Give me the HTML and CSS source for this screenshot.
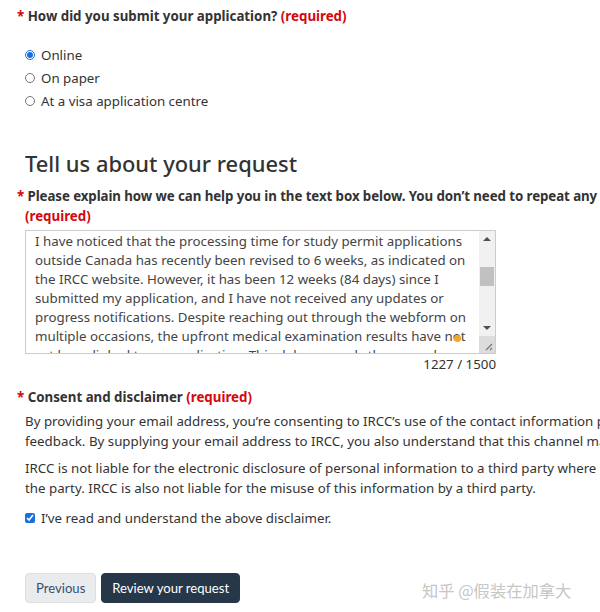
FILE: index.html
```html
<!DOCTYPE html>
<html lang="en">
<head>
<meta charset="utf-8">
<title>Tell us about your request</title>
<link rel="stylesheet" href="styles.css">
</head>
<body>
<main class="page">
  <fieldset class="group">
    <legend class="label"><span class="star">*</span> How did you submit your application? <strong class="req">(required)</strong></legend>
    <div class="options">
      <label class="opt"><input type="radio" name="how" checked> <span>Online</span></label>
      <label class="opt"><input type="radio" name="how"> <span>On paper</span></label>
      <label class="opt"><input type="radio" name="how"> <span>At a visa application centre</span></label>
    </div>
  </fieldset>

  <h2 class="heading">Tell us about your request</h2>

  <div class="field">
    <div class="label label-wide"><span class="star">*</span> Please explain how we can help you in the text box below. You don’t need to repeat any information you have already provided.</div>
    <div class="label req req-line">(required)</div>
    <div class="textarea-wrap">
      <div class="textarea">
        <div class="ta-text">
          <span class="line">I have noticed that the processing time for study permit applications</span>
          <span class="line">outside Canada has recently been revised to 6 weeks, as indicated on</span>
          <span class="line">the IRCC website. However, it has been 12 weeks (84 days) since I</span>
          <span class="line">submitted my application, and I have not received any updates or</span>
          <span class="line">progress notifications. Despite reaching out through the webform on</span>
          <span class="line">multiple occasions, the upfront medical examination results have not</span>
          <span class="line">yet been linked to my application. This delay exceeds the normal</span>
        </div>
        <div class="scrollbar">
          <div class="sb-arrow sb-up"></div>
          <div class="sb-track"><div class="sb-thumb"></div></div>
          <div class="sb-arrow sb-down"></div>
          <div class="sb-corner">
            <svg width="16" height="17" viewBox="0 0 16 17"><path d="M13 8 L7 14 M13 12 L11 14" stroke="#777" stroke-width="1.2" fill="none"/></svg>
          </div>
        </div>
        <span class="cursor-dot"></span>
      </div>
      <div class="counter">1227 / 1500</div>
    </div>
  </div>

  <div class="field consent">
    <div class="label"><span class="star">*</span> Consent and disclaimer <strong class="req">(required)</strong></div>
    <p class="para"><span class="line">By providing your email address, you’re consenting to IRCC’s use of the contact information provided to respond to your</span><span class="line">feedback. By supplying your email address to IRCC, you also understand that this channel may not be secure.</span></p>
    <p class="para"><span class="line">IRCC is not liable for the electronic disclosure of personal information to a third party where IRCC cannot verify</span><span class="line">the party. IRCC is also not liable for the misuse of this information by a third party.</span></p>
    <label class="opt check"><input type="checkbox" checked> <span>I’ve read and understand the above disclaimer.</span></label>
  </div>

  <div class="actions">
    <button class="btn btn-default" type="button">Previous</button>
    <button class="btn btn-primary" type="button">Review your request</button>
  </div>
</main>
<div class="watermark">知乎 @假装在加拿大</div>
</body>
</html>
```

FILE: styles.css
```css
html, body {
  margin: 0;
  padding: 0;
  background: #fff;
  overflow: hidden;
}
body {
  width: 600px;
  height: 612px;
  position: relative;
  font-family: "Noto Sans", "Open Sans", sans-serif;
  color: #333;
  font-size: 13.3px;
}
.page {
  padding: 6px 0 0 25px;
  width: 1100px;
}
.group {
  border: 0;
  margin: 0;
  padding: 0;
}
.label {
  font-weight: 700;
  font-size: 13.3px;
  line-height: 20px;
  margin-left: -8px;
  padding: 0;
  color: #333;
}
.star {
  color: #d3080c;
}
.req {
  color: #d3080c;
  font-weight: 700;
}
.options {
  margin-top: 17px;
  display: flex;
  flex-direction: column;
}
.opt {
  display: flex;
  align-items: center;
  height: 23px;
  font-size: 13.3px;
}
.opt input {
  margin: 0 6px 0 0;
  width: 10px;
  height: 10px;
  accent-color: #1a6fe0;
}
.heading {
  font-family: "Noto Sans", sans-serif;
  font-weight: 500;
  font-size: 21.9px;
  margin: 37px 0 7px 0;
  line-height: 30px;
  color: #333;
}
.label-wide {
  white-space: nowrap;
  letter-spacing: -0.08px;
}
.req-line {
  margin-left: 0;
}
.textarea-wrap {
  width: 471px;
  margin-top: 4px;
}
.textarea {
  position: relative;
  display: flex;
  height: 124px;
  border: 1px solid #ccc;
  box-sizing: border-box;
  overflow: hidden;
}
.ta-text {
  flex: 1;
  min-width: 0;
  overflow: hidden;
  padding: 1px 0 0 9px;
  font-size: 13.3px;
  line-height: 19px;
  color: #444;
}
.scrollbar {
  width: 16px;
  display: flex;
  flex-direction: column;
  background: #f1f1f1;
  flex: none;
}
.sb-arrow {
  height: 17px;
  flex: none;
  position: relative;
}
.sb-up::after, .sb-down::after {
  content: "";
  position: absolute;
  left: 4px;
  border-left: 4px solid transparent;
  border-right: 4px solid transparent;
}
.sb-up::after {
  top: 6px;
  border-bottom: 4px solid #505050;
}
.sb-down::after {
  top: 7px;
  border-top: 4px solid #505050;
}
.sb-track {
  flex: 1;
  padding: 19px 1px 0 1px;
}
.sb-thumb {
  height: 19px;
  background: #c1c1c1;
}
.sb-corner {
  height: 17px;
  flex: none;
  background: #dcdcdc;
}
.sb-corner svg {
  display: block;
}
.cursor-dot {
  position: absolute;
  left: 428px;
  top: 104px;
  width: 7px;
  height: 7px;
  border-radius: 50%;
  background: #f5a623;
}
.counter {
  text-align: right;
  font-size: 13.3px;
  line-height: 20px;
  margin-top: 0;
}
.consent {
  margin-top: 13px;
}
.para {
  margin: 5px 0 8px 0;
  line-height: 19.5px;
  font-size: 13.3px;
}
.line {
  display: block;
  white-space: nowrap;
}
.check {
  margin-top: 7px;
}
.actions {
  display: flex;
  gap: 5px;
  margin-top: 44px;
}
.btn {
  font-family: "Lato", sans-serif;
  font-size: 13.1px;
  height: 30px;
  padding: 0 10px;
  border-radius: 4px;
  cursor: pointer;
}
.btn-default {
  background: #eaebed;
  border: 1px solid #dcdee1;
  color: #335075;
}
.btn-primary {
  background: #26374a;
  border: 1px solid #26374a;
  color: #fff;
}
.watermark {
  position: absolute;
  left: 422px;
  top: 578px;
  font-family: "Noto Sans CJK SC", sans-serif;
  font-size: 16.3px;
  color: rgba(190,190,190,0.9);
  text-shadow: 0 0 1px #fff;
  white-space: nowrap;
}
```
